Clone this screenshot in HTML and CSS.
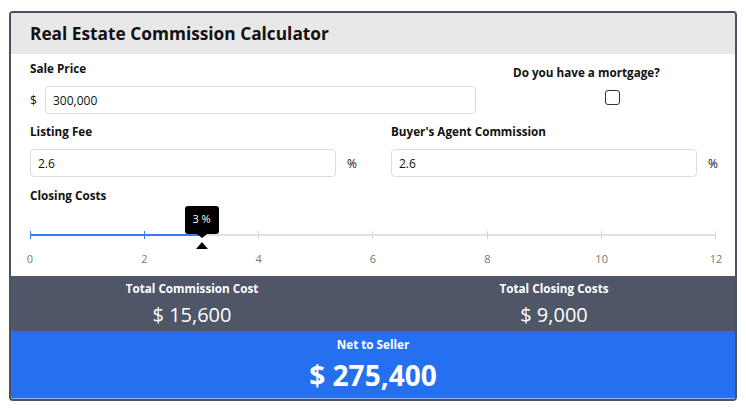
FILE: index.html
```html
<!DOCTYPE html>
<html lang="en">
<head>
  <meta charset="UTF-8">
  <meta name="viewport" content="width=device-width, initial-scale=1">
  <title>Real Estate Commission Calculator</title>
  <link rel="stylesheet" href="styles.css">
</head>
<body>
  <div class="calc">
    <div class="calc-head">
      <h1>Real Estate Commission Calculator</h1>
    </div>
    <div class="calc-body">
      <div class="row-top">
        <div class="field sale">
          <label for="salePrice">Sale Price</label>
          <div class="input-line">
            <span class="unit pre">$</span>
            <input type="text" id="salePrice" value="300,000">
          </div>
        </div>
        <div class="mortgage">
          <label for="hasMortgage">Do you have a mortgage?</label>
          <input type="checkbox" id="hasMortgage">
        </div>
      </div>
      <div class="row-two">
        <div class="field">
          <label for="listingFee">Listing Fee</label>
          <div class="input-line">
            <input type="text" id="listingFee" value="2.6">
            <span class="unit post">%</span>
          </div>
        </div>
        <div class="field">
          <label for="buyerFee">Buyer's Agent Commission</label>
          <div class="input-line">
            <input type="text" id="buyerFee" value="2.6">
            <span class="unit post">%</span>
          </div>
        </div>
      </div>
      <div class="closing">
        <label>Closing Costs</label>
        <div class="slider">
          <div class="track">
            <div class="fill" style="width: 25%"></div>
            <div class="ticks">
              <span class="tick on"></span>
              <span class="tick on"></span>
              <span class="tick"></span>
              <span class="tick"></span>
              <span class="tick"></span>
              <span class="tick"></span>
              <span class="tick"></span>
            </div>
            <div class="handle" style="left: 25%">
              <div class="tip">3 %</div>
            </div>
          </div>
          <div class="scale">
            <span>0</span><span>2</span><span>4</span><span>6</span><span>8</span><span>10</span><span>12</span>
          </div>
        </div>
      </div>
    </div>
    <div class="totals">
      <div class="total">
        <div class="total-label">Total Commission Cost</div>
        <div class="total-value">$ 15,600</div>
      </div>
      <div class="total">
        <div class="total-label">Total Closing Costs</div>
        <div class="total-value">$ 9,000</div>
      </div>
    </div>
    <div class="net">
      <div class="total-label">Net to Seller</div>
      <div class="net-value">$ 275,400</div>
    </div>
  </div>
</body>
</html>
```

FILE: styles.css
```css
body {
  font-family: 'Open Sans', 'Liberation Sans', Arial, sans-serif;
  background: #fff;
  color: #111;
  margin: 0;
  padding: 11px 9px;
}
.calc {
  border: 2px solid #4a5162;
  border-radius: 4px;
  overflow: hidden;
  background: #fff;
}
.calc-head {
  background: #e8e8e8;
  height: 41px;
  padding: 0 19px;
  display: flex;
  align-items: center;
}
.calc-head h1 {
  margin: 0;
  font-size: 17.3px;
  font-weight: 700;
}
.calc-body {
  padding: 5px 19px 0 19px;
}
label {
  display: block;
  font-size: 11.7px;
  font-weight: 700;
  line-height: 18px;
}
input[type="text"] {
  box-sizing: border-box;
  height: 28px;
  border: 1px solid #dcdcdc;
  border-radius: 4px;
  padding: 0 7px;
  font-family: inherit;
  font-size: 12px;
  color: #111;
  flex: 1;
  min-width: 0;
}
.input-line {
  display: flex;
  align-items: center;
}
.unit {
  font-size: 12px;
}
.unit.pre {
  width: 15px;
}
.unit.post {
  margin-left: 11px;
  width: 8px;
}
.row-top {
  display: flex;
}
.field label {
  margin-bottom: 9px;
}
.sale {
  width: 446px;
}
.mortgage {
  flex: 1;
  padding-top: 4px;
  padding-left: 37px;
}
.mortgage label {
  margin-bottom: 9px;
}
.mortgage input {
  appearance: none;
  -webkit-appearance: none;
  box-sizing: border-box;
  width: 15px;
  height: 15px;
  margin: 0 0 0 92px;
  border: 1.5px solid #333;
  border-radius: 3px;
  background: #fff;
  display: block;
}
.row-two {
  display: grid;
  grid-template-columns: 1fr 1fr;
  gap: 36px;
  margin-top: 8px;
}
.closing {
  margin-top: 9px;
}
.slider {
  padding: 30px 0 10px 0;
}
.track {
  position: relative;
  height: 2px;
  background: #e2e2e2;
}
.fill {
  height: 2px;
  background: #3a7be6;
}
.ticks {
  position: absolute;
  left: 0;
  right: 0;
  top: -3px;
  display: flex;
  justify-content: space-between;
}
.tick {
  width: 1px;
  height: 8px;
  background: #d6d6d6;
}
.tick.on {
  background: #3a7be6;
}
.handle {
  position: absolute;
  top: 8px;
  width: 0;
  height: 0;
  margin-left: -6px;
  border-left: 6px solid transparent;
  border-right: 6px solid transparent;
  border-bottom: 7px solid #000;
}
.tip {
  position: absolute;
  bottom: 8px;
  left: -17px;
  width: 34px;
  height: 28px;
  background: #000;
  color: #fff;
  border-radius: 3px;
  font-size: 11px;
  line-height: 26px;
  text-align: center;
}
.tip::after {
  content: '';
  position: absolute;
  left: 12px;
  top: 28px;
  border-left: 5px solid transparent;
  border-right: 5px solid transparent;
  border-top: 4px solid #000;
}
.scale {
  display: flex;
  justify-content: space-between;
  margin-top: 15px;
}
.scale span {
  width: 0;
  display: flex;
  justify-content: center;
  font-size: 11px;
  line-height: 15px;
  color: #777;
}
.totals {
  display: grid;
  grid-template-columns: 1fr 1fr;
  background: #4e5668;
  color: #fff;
  height: 55px;
}
.total {
  text-align: center;
  padding-top: 3px;
}
.total-label {
  font-size: 11.7px;
  font-weight: 700;
  line-height: 18px;
}
.total-value {
  font-size: 20px;
  line-height: 30px;
  margin-top: 3px;
}
.net {
  background: #2470f0;
  border-bottom: 1px solid #8fb6f6;
  color: #fff;
  text-align: center;
  height: 68px;
  padding-top: 4px;
  box-sizing: border-box;
}
.net-value {
  font-size: 28px;
  font-weight: 700;
  line-height: 36px;
  margin-top: 4px;
}
```
